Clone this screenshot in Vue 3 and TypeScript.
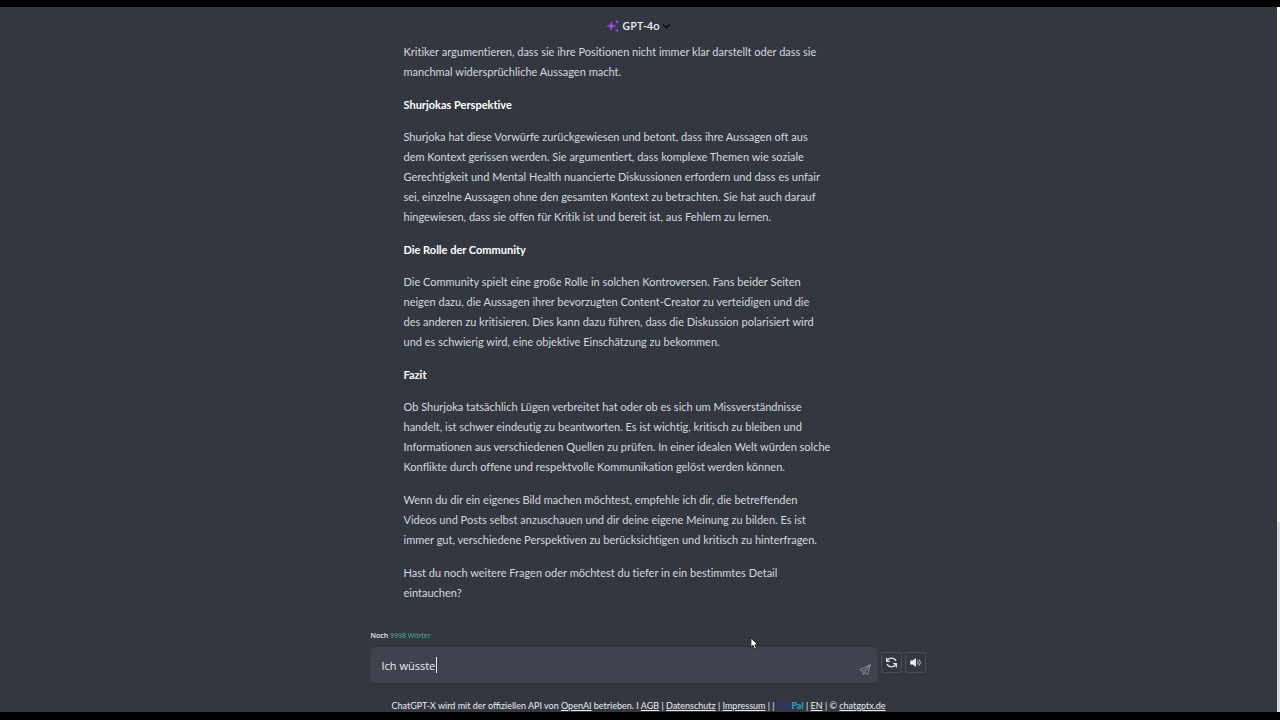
<script setup lang="ts">
import { ref } from 'vue'

interface Block {
  kind: 'heading' | 'text'
  text: string
}

const blocks: Block[] = [
  { kind: 'text', text: 'Kritiker argumentieren, dass sie ihre Positionen nicht immer klar darstellt oder dass sie\nmanchmal widersprüchliche Aussagen macht.' },
  { kind: 'heading', text: 'Shurjokas Perspektive' },
  { kind: 'text', text: 'Shurjoka hat diese Vorwürfe zurückgewiesen und betont, dass ihre Aussagen oft aus\ndem Kontext gerissen werden. Sie argumentiert, dass komplexe Themen wie soziale\nGerechtigkeit und Mental Health nuancierte Diskussionen erfordern und dass es unfair\nsei, einzelne Aussagen ohne den gesamten Kontext zu betrachten. Sie hat auch darauf\nhingewiesen, dass sie offen für Kritik ist und bereit ist, aus Fehlern zu lernen.' },
  { kind: 'heading', text: 'Die Rolle der Community' },
  { kind: 'text', text: 'Die Community spielt eine große Rolle in solchen Kontroversen. Fans beider Seiten\nneigen dazu, die Aussagen ihrer bevorzugten Content-Creator zu verteidigen und die\ndes anderen zu kritisieren. Dies kann dazu führen, dass die Diskussion polarisiert wird\nund es schwierig wird, eine objektive Einschätzung zu bekommen.' },
  { kind: 'heading', text: 'Fazit' },
  { kind: 'text', text: 'Ob Shurjoka tatsächlich Lügen verbreitet hat oder ob es sich um Missverständnisse\nhandelt, ist schwer eindeutig zu beantworten. Es ist wichtig, kritisch zu bleiben und\nInformationen aus verschiedenen Quellen zu prüfen. In einer idealen Welt würden solche\nKonflikte durch offene und respektvolle Kommunikation gelöst werden können.' },
  { kind: 'text', text: 'Wenn du dir ein eigenes Bild machen möchtest, empfehle ich dir, die betreffenden\nVideos und Posts selbst anzuschauen und dir deine eigene Meinung zu bilden. Es ist\nimmer gut, verschiedene Perspektiven zu berücksichtigen und kritisch zu hinterfragen.' },
  { kind: 'text', text: 'Hast du noch weitere Fragen oder möchtest du tiefer in ein bestimmtes Detail\neintauchen?' },
]

const draft = ref('Ich wüsste ')
</script>

<template>
  <div class="screen">
    <div class="page">
      <header class="top">
        <button type="button" class="model">
          <svg class="spark" viewBox="0 0 24 24" aria-hidden="true">
            <path d="M9 3 11 10 18 12 11 14 9 21 7 14 0 12 7 10Z" />
            <path d="M19 1 20 4 23 5 20 6 19 9 18 6 15 5 18 4Z" />
            <path d="M19 16 20 19 23 20 20 21 19 24 18 21 15 20 18 19Z" />
          </svg>
          <span>GPT-4o</span>
          <svg class="chevron" viewBox="0 0 10 10" aria-hidden="true"><path d="M1 2.500 5 6.500 9 2.500" /></svg>
        </button>
      </header>

      <main class="conversation">
        <article class="message">
          <template v-for="(block, i) in blocks" :key="i">
            <h2 v-if="block.kind === 'heading'">{{ block.text }}</h2>
            <p v-else>{{ block.text }}</p>
          </template>
        </article>
      </main>

      <form class="composer" @submit.prevent>
        <label class="quota" for="draft">Noch <span>9998 Wörter</span></label>
        <div class="row">
          <div class="field">
            <input id="draft" v-model="draft" type="text" autocomplete="off" />
            <span class="caret"></span>
            <button type="submit" class="send" aria-label="Senden">
              <svg viewBox="0 0 16 16"><path d="M15 1 11.500 14 7.500 11 6 14.500 5 9.500 1 7.500Z M15 1 5 9.500 M15 1 7.500 11" /></svg>
            </button>
          </div>
          <button type="button" class="tool" aria-label="Neu laden">
            <svg viewBox="0 0 16 16" class="line">
              <path d="M2.500 6A6 5.500 0 0 1 13.500 6M13.500 10A6 5.500 0 0 1 2.500 10" />
              <path d="M2 2V6.500H6M14 14V9.500H10" />
            </svg>
          </button>
          <button type="button" class="tool" aria-label="Vorlesen">
            <svg viewBox="0 0 16 16" class="line">
              <path class="solid" d="M1.500 5.500H4.500L8.500 2.500V13.500L4.500 10.500H1.500Z" />
              <path d="M10.500 5.500Q12 8 10.500 10.500M12.500 4Q15.500 8 12.500 12" class="thin" />
            </svg>
          </button>
        </div>
      </form>

      <footer class="legal">
        ChatGPT-X wird mit der offiziellen API von <a href="#">OpenAI</a> betrieben. I
        <a href="#">AGB</a> | <a href="#">Datenschutz</a> | <a href="#">Impressum</a> | |
        <a href="#" class="paypal"><span class="pay">Pay</span><span class="pal">Pal</span></a> |
        <a href="#">EN</a> | © <a href="#">chatgptx.de</a>
      </footer>
    </div>
    <div class="scrollbar"><div class="thumb"></div></div>
    <svg class="pointer" viewBox="0 0 10 14" aria-hidden="true"><path d="M1 1V11L3.500 9 5 13 7 12 5.500 8.500H9Z" /></svg>
  </div>
</template>

<style>
body {
  margin: 0;
  background: #000;
}
</style>

<style scoped>
.screen {
  position: relative;
  box-sizing: border-box;
  height: 100vh;
  padding: 7px 0 8px;
  display: flex;
  background: #000;
  color: #ececf1;
  font-family: "Open Sans", "Noto Sans", sans-serif;
  font-size: 11px;
  overflow: hidden;
}
.page {
  flex: 1;
  min-width: 0;
  display: flex;
  flex-direction: column;
  background: #33373f;
}
.scrollbar {
  width: 3px;
  display: flex;
  align-items: flex-end;
  background: #fff;
}
.thumb {
  width: 100%;
  height: 27%;
  background: #dcdce6;
}
button {
  padding: 0;
  border: 0;
  background: none;
  color: inherit;
  font: inherit;
}
svg {
  display: block;
}
.top {
  display: flex;
  justify-content: center;
  padding: 9px 0 3px;
}
.model {
  display: flex;
  align-items: center;
  gap: 2px;
  line-height: 20px;
  font-weight: 600;
}
.spark {
  width: 14px;
  height: 14px;
  fill: #9b4de0;
}
.chevron {
  width: 9px;
  height: 9px;
  fill: none;
  stroke: #0c0d10;
  stroke-width: 1.5;
}
.conversation {
  flex: 1;
  min-height: 0;
  overflow: hidden;
  display: flex;
  flex-direction: column;
  justify-content: flex-end;
}
.message {
  width: 470px;
  margin: 0 auto;
  padding-bottom: 28px;
  font-family: Lato, "Open Sans", sans-serif;
  font-variant-ligatures: none;
}
.message p,
.message h2 {
  margin: 0 0 13px;
  font-size: 11px;
  white-space: pre;
}
.message p {
  line-height: 20px;
  color: #d5d9df;
}
.message h2 {
  line-height: 19px;
  font-weight: 700;
  color: #fff;
}
.message p:last-child {
  margin: 0;
}
.composer {
  width: 555px;
  margin: 0 auto;
  padding-left: 19px;
}
.quota {
  display: block;
  font-size: 7px;
  line-height: 10px;
  font-weight: 600;
}
.quota span {
  color: #45b594;
  font-weight: 400;
}
.row {
  display: flex;
  align-items: flex-start;
  gap: 3px;
  margin-top: 6px;
}
.field {
  position: relative;
  flex: 1;
  display: flex;
  height: 36px;
  margin-right: 1px;
  background: #40434d;
  border-radius: 4px;
}
.field input {
  flex: 1;
  min-width: 0;
  padding: 0 11px;
  border: 0;
  outline: 0;
  background: none;
  color: #ececf1;
  font: inherit;
}
.caret {
  position: absolute;
  left: 65px;
  top: 10px;
  width: 1px;
  height: 16px;
  background: #ececf1;
}
.send {
  align-self: flex-end;
  margin: 0 6px 7px 0;
}
.send svg {
  width: 12px;
  height: 12px;
  fill: none;
  stroke: #9a9ca8;
  stroke-width: 1;
  stroke-linejoin: round;
}
.tool {
  display: grid;
  place-items: center;
  width: 21px;
  height: 21px;
  margin-top: 5px;
  border: 1px solid #4b4e58;
  border-radius: 3px;
  box-sizing: border-box;
}
.tool svg {
  width: 13px;
  height: 13px;
}
.line {
  fill: none;
  stroke: #dfe0e6;
  stroke-width: 1.5;
}
.line .solid {
  fill: #ececf1;
  stroke: none;
}
.line .thin {
  stroke-width: 1;
}
.legal {
  padding: 16px 0 0;
  height: 13px;
  overflow: hidden;
  line-height: 14px;
  font-family: Lato, "Open Sans", sans-serif;
  font-size: 9px;
  text-align: center;
  white-space: nowrap;
}
.legal a {
  color: inherit;
}
.legal .paypal {
  font-weight: 700;
  text-decoration: none;
}
.pay {
  color: #253b80;
}
.pal {
  color: #2fa3d6;
}
.pointer {
  position: absolute;
  left: 750px;
  top: 637px;
  width: 9px;
  height: 13px;
  fill: #fff;
  stroke: #17181c;
  stroke-width: 1;
}
</style>
